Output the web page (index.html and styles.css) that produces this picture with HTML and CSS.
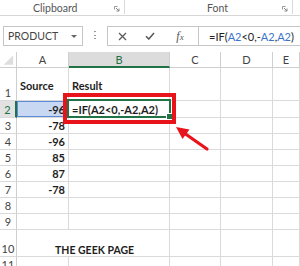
FILE: index.html
```html
<!DOCTYPE html>
<html>
<head>
<meta charset="utf-8">
<link rel="stylesheet" href="styles.css">
</head>
<body>
<div class="ribbon">
  <div class="group g1"><span class="glabel">Clipboard</span><svg class="launch" viewBox="0 0 6 6"><path d="M0.5 3.5V0.5H3.5" fill="none" stroke="#999" stroke-width="1"/><path d="M2 2L5 5M5 2.5V5H2.5" fill="none" stroke="#888" stroke-width="1"/></svg></div>
  <div class="group g2"><span class="glabel">Font</span><svg class="launch" viewBox="0 0 6 6"><path d="M0.5 3.5V0.5H3.5" fill="none" stroke="#999" stroke-width="1"/><path d="M2 2L5 5M5 2.5V5H2.5" fill="none" stroke="#888" stroke-width="1"/></svg></div>
</div>
<div class="fbar">
  <div class="namebox"><span>PRODUCT</span><span class="caret"></span></div>
  <div class="grip"><span class="dots"></span></div>
  <div class="fbtns">
    <span class="slot"><svg width="9" height="9" viewBox="0 0 9 9"><path d="M1 1L8 8M8 1L1 8" stroke="#5a5a5a" stroke-width="1.3"/></svg></span>
    <span class="slot"><svg width="10" height="8" viewBox="0 0 10 8"><path d="M1 4.2L3.8 7L9 1" stroke="#5a5a5a" stroke-width="1.6" fill="none"/></svg></span>
    <span class="slot fx">f<span class="fxx">x</span></span>
  </div>
  <div class="finput"><span>=IF(</span><span class="ref">A2</span><span>&lt;0,-</span><span class="ref">A2</span><span>,</span><span class="ref">A2</span><span>)</span></div>
</div>
<div class="sheet">
  <div class="c h corner"><svg width="17" height="16" viewBox="0 0 17 16"><polygon points="14,3 14,13 4,13" fill="#dedede"/></svg></div>
  <div class="c h">A</div>
  <div class="c h selh">B</div>
  <div class="c h">C</div>
  <div class="c h">D</div>
  <div class="c h">E</div>

  <div class="c rh">1</div>
  <div class="c r1">Source</div>
  <div class="c r1">Result</div>
  <div class="c"></div><div class="c"></div><div class="c"></div>

  <div class="c rh selr">2</div>
  <div class="c num a2">-96</div>
  <div class="c b2">=IF(A2&lt;0,-A2,A2)</div>
  <div class="c"></div><div class="c"></div><div class="c"></div>

  <div class="c rh">3</div>
  <div class="c num">-78</div>
  <div class="c"></div><div class="c"></div><div class="c"></div><div class="c"></div>

  <div class="c rh">4</div>
  <div class="c num">-96</div>
  <div class="c"></div><div class="c"></div><div class="c"></div><div class="c"></div>

  <div class="c rh">5</div>
  <div class="c num">85</div>
  <div class="c"></div><div class="c"></div><div class="c"></div><div class="c"></div>

  <div class="c rh">6</div>
  <div class="c num">87</div>
  <div class="c"></div><div class="c"></div><div class="c"></div><div class="c"></div>

  <div class="c rh">7</div>
  <div class="c num">-78</div>
  <div class="c"></div><div class="c"></div><div class="c"></div><div class="c"></div>

  <div class="c rh">8</div>
  <div class="c"></div><div class="c"></div><div class="c"></div><div class="c"></div><div class="c"></div>

  <div class="c rh">9</div>
  <div class="c"></div><div class="c"></div><div class="c"></div><div class="c"></div><div class="c"></div>

  <div class="c rh">10</div>
  <div class="c span2 geek">THE GEEK PAGE</div>
  <div class="c"></div><div class="c"></div><div class="c"></div>

  <div class="c rh">11</div>
  <div class="c"></div><div class="c"></div><div class="c"></div><div class="c"></div><div class="c"></div>
</div>
<div class="redbox"></div>
<svg class="arrow" width="45" height="32" viewBox="0 0 45 32">
  <line x1="15.5" y1="12" x2="37" y2="27" stroke="#e8141b" stroke-width="3.2" stroke-linecap="round"/>
  <polygon points="6,5 19.5,7.5 12.5,17" fill="#e8141b"/>
</svg>
</body>
</html>
```
FILE: styles.css
```css
* { box-sizing: border-box; }
body {
  margin: 0;
  width: 300px;
  height: 266px;
  overflow: hidden;
  background: #fff;
  font-family: Lato, "Open Sans", sans-serif;
  position: relative;
}
.ribbon {
  display: flex;
  height: 16px;
  border-bottom: 1px solid #d6d6d6;
}
.group {
  display: flex;
  align-items: flex-end;
  height: 14px;
  border-right: 1px solid #dadada;
  font-size: 10.5px;
  line-height: 12px;
  color: #555;
}
.g1 { width: 125px; padding-left: 33px; }
.g2 { width: 168px; padding-left: 82px; }
.launch {
  margin-left: auto;
  margin-right: 4px;
  margin-bottom: 2px;
  width: 6px;
  height: 6px;
}
.fbar {
  display: flex;
  align-items: center;
  padding: 10px 0 6px 0;
}
.namebox {
  margin-left: 3px;
  width: 80px;
  height: 20px;
  border: 1px solid #c6c6c6;
  display: flex;
  align-items: center;
  padding: 0 4px 0 4px;
  font-size: 10.5px;
  color: #444;
}
.caret {
  margin-left: auto;
  margin-right: 1px;
  border-left: 3px solid transparent;
  border-right: 3px solid transparent;
  border-top: 3px solid #666;
}
.grip {
  width: 24px;
  height: 20px;
  display: flex;
  justify-content: center;
  align-items: center;
}
.dots {
  width: 2px;
  height: 10px;
  background: repeating-linear-gradient(#9a9a9a 0 1px, transparent 1px 3.5px);
}
.fbtns {
  width: 92px;
  height: 20px;
  border: 1px solid #c6c6c6;
  display: flex;
  align-items: center;
}
.slot {
  width: 28px;
  display: flex;
  justify-content: center;
  align-items: center;
}
.fx {
  font-family: "Liberation Serif", serif;
  font-style: italic;
  font-size: 12px;
  color: #555;
  padding-left: 4px;
}
.fxx { font-size: 9px; position: relative; top: 1px; }
.finput {
  flex: 1;
  height: 20px;
  border: 1px solid #c6c6c6;
  border-right: none;
  margin-left: -1px;
  padding-left: 10px;
  font-size: 11px;
  display: flex;
  align-items: center;
  color: #222;
}
.ref { color: #3b73c9; }
.sheet {
  display: grid;
  grid-template-columns: 17px 52px 101px 51px 52px 27px;
  grid-template-rows: 16px 33px 17px repeat(7, 16px) 27px 16px;
}
.c {
  border-right: 1px solid #dadada;
  border-bottom: 1px solid #dadada;
  font-size: 11px;
  font-weight: 700;
  color: #1e1e1e;
  display: flex;
  align-items: flex-end;
  padding: 0 3px 1px;
  white-space: nowrap;
  min-width: 0;
}
.r1 { padding-bottom: 8px; }
.num { justify-content: flex-end; }
.h {
  justify-content: center;
  align-items: center;
  font-weight: 400;
  color: #444;
  border-color: #cfcfcf;
  padding: 0;
}
.corner { padding: 0; align-items: stretch; }
.rh {
  justify-content: center;
  font-weight: 400;
  color: #444;
  border-right-color: #cfcfcf;
  padding: 0 0 1px;
}
.selh {
  background: #dcdcdc;
  color: #217346;
  border-bottom: 2px solid #217346;
}
.selr {
  background: #e2e2e2;
  color: #217346;
  border-right: 2px solid #217346;
}
.a2 {
  background: #c9d8f2;
  box-shadow: inset 0 1px 0 #5b8ad8, inset 0 -1px 0 #5b8ad8, inset 1px 0 0 #5b8ad8;
}
.b2 { position: relative; }
.b2::before {
  content: "";
  position: absolute;
  left: -2px;
  top: -2px;
  right: -2px;
  bottom: -1px;
  border: 2px solid #217346;
}
.b2::after {
  content: "";
  position: absolute;
  right: -4px;
  bottom: -3px;
  width: 5px;
  height: 5px;
  background: #217346;
  border: 1px solid #fff;
}
.span2 { grid-column: span 2; }
.geek {
  padding-left: 38px;
  font-size: 10.5px;
  padding-bottom: 0;
}
.redbox {
  position: absolute;
  left: 63px;
  top: 93px;
  width: 113px;
  height: 31px;
  border: 4px solid #e8141b;
}
.arrow {
  position: absolute;
  left: 170px;
  top: 122px;
}
```
